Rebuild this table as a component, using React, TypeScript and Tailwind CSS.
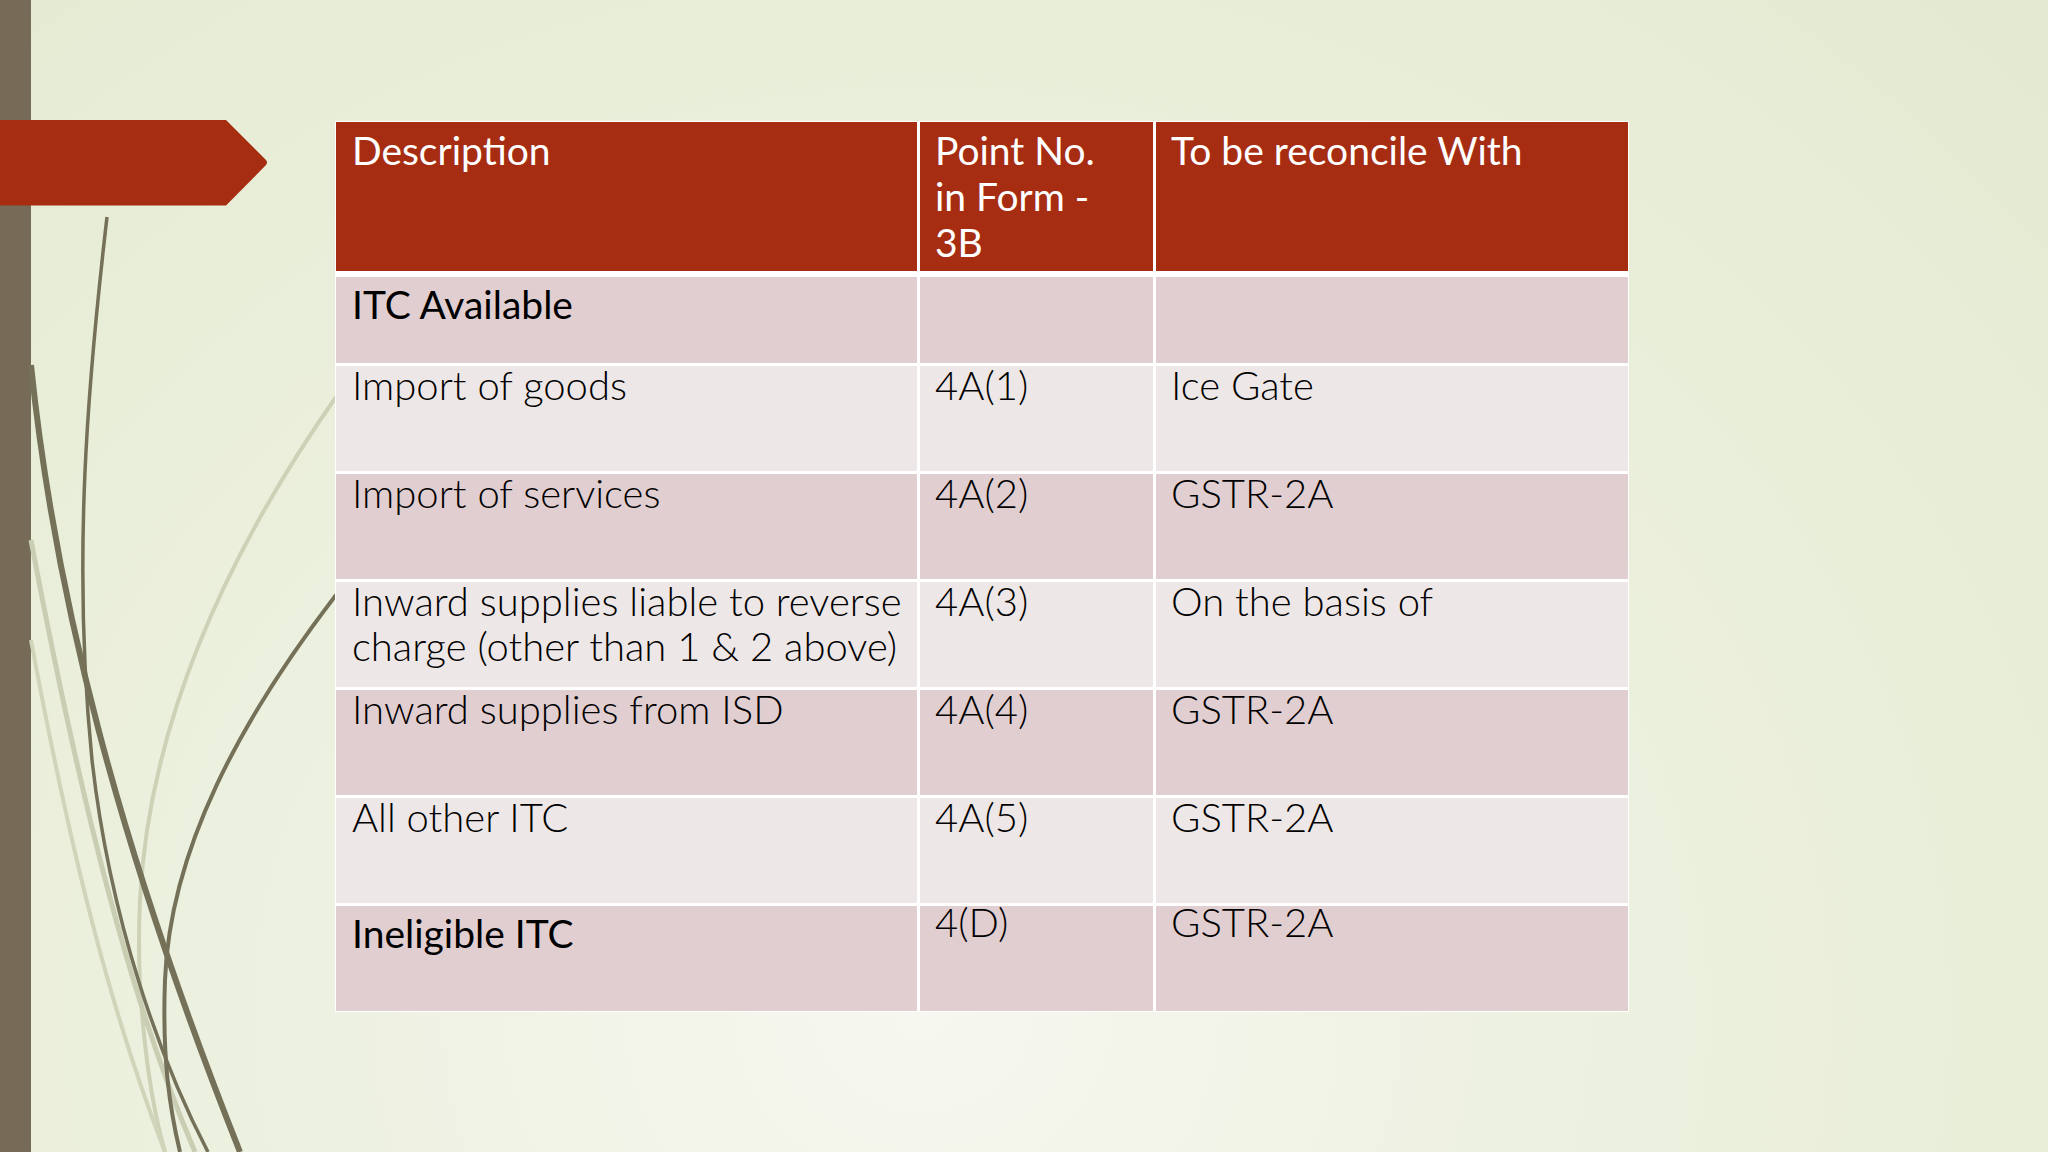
import React from "react";

type Row = {
  desc: string;
  point: string;
  rec: string;
  band: "pink" | "light";
};

const rows: Row[] = [
  { desc: "Import of goods", point: "4A(1)", rec: "Ice Gate", band: "light" },
  { desc: "Import of services", point: "4A(2)", rec: "GSTR-2A", band: "pink" },
  {
    desc: "Inward supplies liable to reverse charge (other than 1 & 2 above)",
    point: "4A(3)",
    rec: "On the basis of",
    band: "light",
  },
  { desc: "Inward supplies from ISD", point: "4A(4)", rec: "GSTR-2A", band: "pink" },
  { desc: "All other ITC", point: "4A(5)", rec: "GSTR-2A", band: "light" },
];

function Curves() {
  return (
    <svg
      className="absolute left-0 top-0 pointer-events-none"
      width="2048"
      height="1152"
      viewBox="0 0 2048 1152"
      fill="none"
    >
      {/* faint curves */}
      <path d="M336 397 C 250 520, 150 700, 140 900 C 135 1000, 150 1100, 165 1152" stroke="#cdd2b6" strokeWidth="4" />
      <path d="M31 540 C 80 800, 130 1000, 195 1152" stroke="#c9ceb2" strokeWidth="5" />
      <path d="M31 640 C 70 850, 110 1010, 165 1152" stroke="#d0d5ba" strokeWidth="4" />
      {/* dark curves */}
      <path d="M107 217 C 88 380, 72 560, 92 760 C 110 920, 160 1060, 208 1152" stroke="#757058" strokeWidth="3.5" />
      <path d="M31 365 C 55 600, 120 850, 240 1152" stroke="#757058" strokeWidth="6" />
      <path d="M336 595 C 240 720, 170 850, 165 980 C 162 1060, 170 1110, 180 1152" stroke="#757058" strokeWidth="4" />
    </svg>
  );
}

function Arrow() {
  return (
    <svg className="absolute left-0 top-[120px]" width="270" height="86" viewBox="0 0 270 86">
      <path d="M0 0 H226 L266 40 Q268 42.5 266 45 L226 85.5 H0 Z" fill="#a62d12" />
    </svg>
  );
}

export default function App() {
  const font = "font-['Lato','Open_Sans',sans-serif]";
  return (
    <div
      className={`relative w-[2048px] h-[1152px] overflow-hidden flex bg-[radial-gradient(ellipse_at_45%_88%,#f6f7f0_0%,#edf1e0_40%,#e4ead1_100%)] ${font}`}
    >
      <div className="w-[31px] h-full bg-[#756b57] shrink-0" />
      <Curves />
      <Arrow />
      <div className="relative pl-[304px] pt-[121px]">
        <div className="bg-white p-px w-[1294px]">
          <div className="grid grid-cols-[581px_233px_472px] gap-x-[3px] text-white text-[39px] leading-[46px] font-normal">
            <div className="h-[149px] bg-[#a62d12] pl-[16px] pr-[4px] pt-[5px]">Description</div>
            <div className="h-[149px] bg-[#a62d12] pl-[15px] pr-[4px] pt-[5px]">
              Point No.
              <br />
              in Form -
              <br />
              3B
            </div>
            <div className="h-[149px] bg-[#a62d12] pl-[15px] pr-[4px] pt-[5px]">To be reconcile With</div>
          </div>
          <div className="grid grid-cols-[581px_233px_472px] gap-x-[3px] gap-y-[3px] mt-[6px] text-black text-[40px] leading-[45px]">
            <div className="h-[86px] bg-[#e1ced0] pl-[16px] pr-[4px] pt-[5px] text-[39px] font-normal">ITC Available</div>
            <div className="h-[86px] bg-[#e1ced0]" />
            <div className="h-[86px] bg-[#e1ced0]" />
            {rows.map((r, i) => {
              const bg = r.band === "pink" ? "bg-[#e1ced0]" : "bg-[#eee7e7]";
              return (
                <React.Fragment key={i}>
                  <div className={`h-[105px] ${bg} pl-[16px] pr-[2px] font-light`}>
                    <div className="-mt-[3px]">{r.desc}</div>
                  </div>
                  <div className={`h-[105px] ${bg} pl-[15px] pr-[4px] font-light`}>
                    <div className="-mt-[3px]">{r.point}</div>
                  </div>
                  <div className={`h-[105px] ${bg} pl-[15px] pr-[4px] font-light`}>
                    <div className="-mt-[3px]">{r.rec}</div>
                  </div>
                </React.Fragment>
              );
            })}
            <div className="h-[105px] bg-[#e1ced0] pl-[16px] pr-[4px] pt-[5px] text-[39px] font-normal">Ineligible ITC</div>
            <div className="h-[105px] bg-[#e1ced0] pl-[15px] pr-[4px] font-light">
              <div className="-mt-[6px]">4(D)</div>
            </div>
            <div className="h-[105px] bg-[#e1ced0] pl-[15px] pr-[4px] font-light">
              <div className="-mt-[6px]">GSTR-2A</div>
            </div>
          </div>
        </div>
      </div>
    </div>
  );
}
